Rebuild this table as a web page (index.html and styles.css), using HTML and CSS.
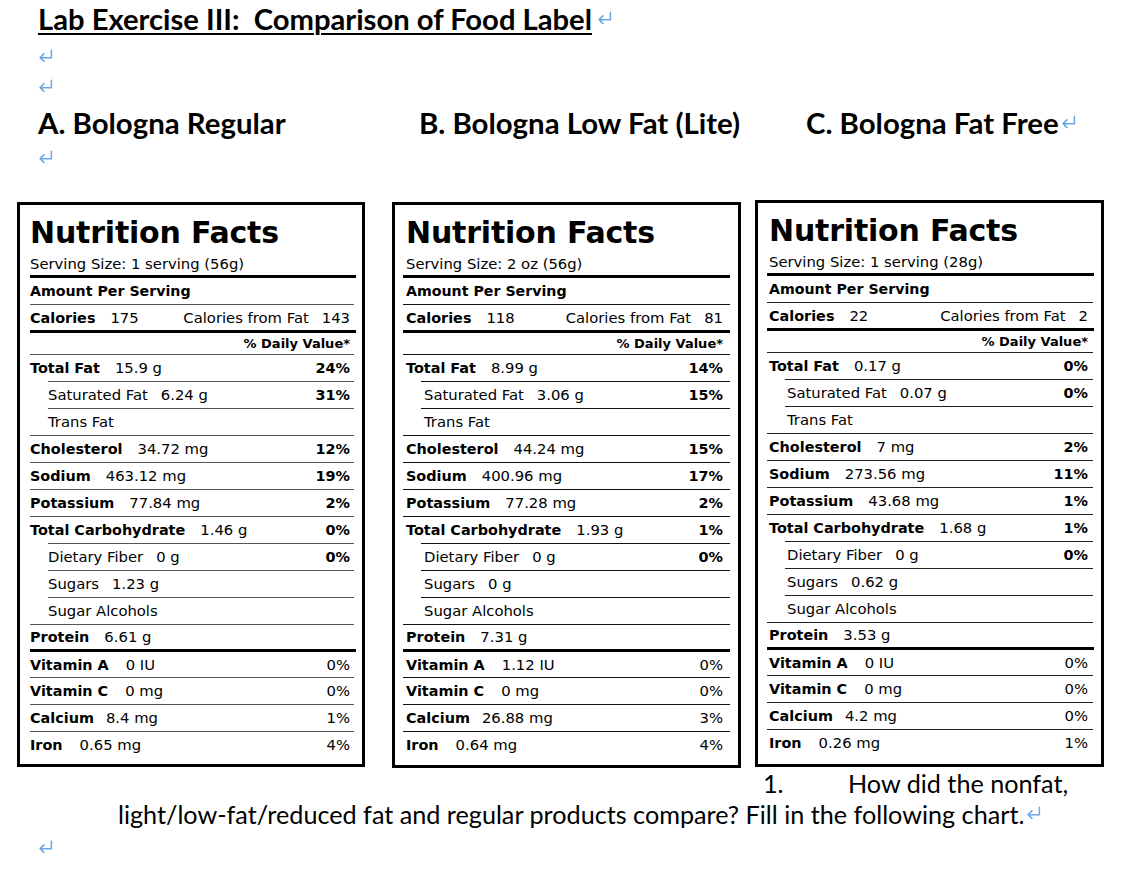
FILE: index.html
```html
<!DOCTYPE html>
<html>
<head>
<meta charset="utf-8">
<title>Lab Exercise III</title>
<link rel="stylesheet" href="styles.css">
</head>
<body>
<div class="page">
  <div class="title-line"><span class="title">Lab Exercise III:&nbsp; Comparison of Food Label</span><svg class="pm pm-inline" viewBox="0 0 14 12"><path d="M12.5 1V8H2M5.5 4.5L2 8L5.5 11.5"/></svg></div>
  <div class="pm-line"><svg class="pm" viewBox="0 0 14 12"><path d="M12.5 1V8H2M5.5 4.5L2 8L5.5 11.5"/></svg></div>
  <div class="pm-line"><svg class="pm" viewBox="0 0 14 12"><path d="M12.5 1V8H2M5.5 4.5L2 8L5.5 11.5"/></svg></div>
  <div class="headings">
    <div class="heading">A. Bologna Regular</div>
    <div class="heading">B. Bologna Low Fat (Lite)</div>
    <div class="heading">C. Bologna Fat Free<svg class="pm pm-inline tight" viewBox="0 0 14 12"><path d="M12.5 1V8H2M5.5 4.5L2 8L5.5 11.5"/></svg></div>
  </div>
  <div class="pm-line short"><svg class="pm" viewBox="0 0 14 12"><path d="M12.5 1V8H2M5.5 4.5L2 8L5.5 11.5"/></svg></div>

  <div class="labels">
    <div class="nf nf-a">
      <div class="nf-title">Nutrition Facts</div>
      <div class="nf-serving">Serving Size: 1 serving (56g)</div>
      <div class="nf-amount">Amount Per Serving</div>
      <div class="nf-cal"><span><b class="b">Calories</b><span class="v">175</span></span><span>Calories from Fat<span class="v">143</span></span></div>
      <div class="nf-dv">% Daily Value*</div>
      <div class="row"><b class="b">Total Fat</b><span class="v">15.9 g</span><b class="pct">24%</b></div>
      <div class="row sub"><span>Saturated Fat</span><span class="v">6.24 g</span><b class="pct">31%</b></div>
      <div class="row sub"><span>Trans Fat</span></div>
      <div class="row"><b class="b">Cholesterol</b><span class="v">34.72 mg</span><b class="pct">12%</b></div>
      <div class="row"><b class="b">Sodium</b><span class="v">463.12 mg</span><b class="pct">19%</b></div>
      <div class="row"><b class="b">Potassium</b><span class="v">77.84 mg</span><b class="pct">2%</b></div>
      <div class="row"><b class="b">Total Carbohydrate</b><span class="v">1.46 g</span><b class="pct">0%</b></div>
      <div class="row sub"><span>Dietary Fiber</span><span class="v">0 g</span><b class="pct">0%</b></div>
      <div class="row sub"><span>Sugars</span><span class="v">1.23 g</span></div>
      <div class="row sub"><span>Sugar Alcohols</span></div>
      <div class="row protein"><b class="b">Protein</b><span class="v">6.61 g</span></div>
      <div class="row vit-first"><b class="b">Vitamin A</b><span class="v vv">0 IU</span><span class="pct reg">0%</span></div>
      <div class="row"><b class="b">Vitamin C</b><span class="v vv">0 mg</span><span class="pct reg">0%</span></div>
      <div class="row"><b class="b">Calcium</b><span class="v vc">8.4 mg</span><span class="pct reg">1%</span></div>
      <div class="row"><b class="b">Iron</b><span class="v vv">0.65 mg</span><span class="pct reg">4%</span></div>
    </div>

    <div class="nf nf-b">
      <div class="nf-title">Nutrition Facts</div>
      <div class="nf-serving">Serving Size: 2 oz (56g)</div>
      <div class="nf-amount">Amount Per Serving</div>
      <div class="nf-cal"><span><b class="b">Calories</b><span class="v">118</span></span><span>Calories from Fat<span class="v">81</span></span></div>
      <div class="nf-dv">% Daily Value*</div>
      <div class="row"><b class="b">Total Fat</b><span class="v">8.99 g</span><b class="pct">14%</b></div>
      <div class="row sub"><span>Saturated Fat</span><span class="v">3.06 g</span><b class="pct">15%</b></div>
      <div class="row sub"><span>Trans Fat</span></div>
      <div class="row"><b class="b">Cholesterol</b><span class="v">44.24 mg</span><b class="pct">15%</b></div>
      <div class="row"><b class="b">Sodium</b><span class="v">400.96 mg</span><b class="pct">17%</b></div>
      <div class="row"><b class="b">Potassium</b><span class="v">77.28 mg</span><b class="pct">2%</b></div>
      <div class="row"><b class="b">Total Carbohydrate</b><span class="v">1.93 g</span><b class="pct">1%</b></div>
      <div class="row sub"><span>Dietary Fiber</span><span class="v">0 g</span><b class="pct">0%</b></div>
      <div class="row sub"><span>Sugars</span><span class="v">0 g</span></div>
      <div class="row sub"><span>Sugar Alcohols</span></div>
      <div class="row protein"><b class="b">Protein</b><span class="v">7.31 g</span></div>
      <div class="row vit-first"><b class="b">Vitamin A</b><span class="v vv">1.12 IU</span><span class="pct reg">0%</span></div>
      <div class="row"><b class="b">Vitamin C</b><span class="v vv">0 mg</span><span class="pct reg">0%</span></div>
      <div class="row"><b class="b">Calcium</b><span class="v vc">26.88 mg</span><span class="pct reg">3%</span></div>
      <div class="row"><b class="b">Iron</b><span class="v vv">0.64 mg</span><span class="pct reg">4%</span></div>
    </div>

    <div class="nf nf-c">
      <div class="nf-title">Nutrition Facts</div>
      <div class="nf-serving">Serving Size: 1 serving (28g)</div>
      <div class="nf-amount">Amount Per Serving</div>
      <div class="nf-cal"><span><b class="b">Calories</b><span class="v">22</span></span><span>Calories from Fat<span class="v">2</span></span></div>
      <div class="nf-dv">% Daily Value*</div>
      <div class="row"><b class="b">Total Fat</b><span class="v">0.17 g</span><b class="pct">0%</b></div>
      <div class="row sub"><span>Saturated Fat</span><span class="v">0.07 g</span><b class="pct">0%</b></div>
      <div class="row sub"><span>Trans Fat</span></div>
      <div class="row"><b class="b">Cholesterol</b><span class="v">7 mg</span><b class="pct">2%</b></div>
      <div class="row"><b class="b">Sodium</b><span class="v">273.56 mg</span><b class="pct">11%</b></div>
      <div class="row"><b class="b">Potassium</b><span class="v">43.68 mg</span><b class="pct">1%</b></div>
      <div class="row"><b class="b">Total Carbohydrate</b><span class="v">1.68 g</span><b class="pct">1%</b></div>
      <div class="row sub"><span>Dietary Fiber</span><span class="v">0 g</span><b class="pct">0%</b></div>
      <div class="row sub"><span>Sugars</span><span class="v">0.62 g</span></div>
      <div class="row sub"><span>Sugar Alcohols</span></div>
      <div class="row protein"><b class="b">Protein</b><span class="v">3.53 g</span></div>
      <div class="row vit-first"><b class="b">Vitamin A</b><span class="v vv">0 IU</span><span class="pct reg">0%</span></div>
      <div class="row"><b class="b">Vitamin C</b><span class="v vv">0 mg</span><span class="pct reg">0%</span></div>
      <div class="row"><b class="b">Calcium</b><span class="v vc">4.2 mg</span><span class="pct reg">0%</span></div>
      <div class="row"><b class="b">Iron</b><span class="v vv">0.26 mg</span><span class="pct reg">1%</span></div>
    </div>
  </div>

  <div class="q-line1"><span class="q-num">1.</span><span>How did the nonfat,</span></div>
  <div class="q-line2">light/low-fat/reduced fat and regular products compare? Fill in the following chart.<svg class="pm pm-inline" viewBox="0 0 14 12"><path d="M12.5 1V8H2M5.5 4.5L2 8L5.5 11.5"/></svg></div>
  <div class="pm-line"><svg class="pm" viewBox="0 0 14 12"><path d="M12.5 1V8H2M5.5 4.5L2 8L5.5 11.5"/></svg></div>
</div>
</body>
</html>
```

FILE: styles.css
```css
html, body {
  margin: 0;
  padding: 0;
  background: #ffffff;
}

.page {
  width: 1138px;
  box-sizing: border-box;
  padding: 0 0 0 38px;
  font-family: "Lato", "Open Sans", sans-serif;
  color: #000;
}

/* paragraph marks */
.pm {
  width: 15px;
  height: 13px;
  display: block;
}
.pm path {
  fill: none;
  stroke: #6aa7e6;
  stroke-width: 1.4;
  stroke-linecap: round;
  stroke-linejoin: round;
}
.pm-inline {
  display: inline-block;
  margin-left: 5px;
  vertical-align: 0.2em;
}
.pm-inline.tight {
  margin-left: 2px;
}
.pm-line {
  height: 30px;
  display: flex;
  align-items: center;
}
.pm-line.short {
  height: 23px;
}

.title-line {
  line-height: 38px;
  margin-bottom: 2px;
  font-size: 29.2px;
  font-weight: 700;
  white-space: nowrap;
}
.title {
  text-decoration: underline;
  text-decoration-thickness: 2px;
  text-underline-offset: 3px;
}

.headings {
  display: grid;
  grid-template-columns: 381px 387px auto;
  font-size: 29.4px;
  font-weight: 700;
  line-height: 45px;
}
.heading {
  white-space: nowrap;
}

/* label row */
.labels {
  margin: 34px 0 0 -21px;
  display: grid;
  grid-template-columns: 375px 363px 349px;
  align-items: start;
}

.nf {
  --pl: 10px;
  --pr: 6px;
  --tp: 0px;
  --lr: 2px;
  --pp: 4px;
  --line: #555;
  width: 348px;
  box-sizing: border-box;
  border: 3px solid #000;
  padding: 13px var(--pr) 6px var(--pl);
  font-family: "DejaVu Sans", "Verdana", sans-serif;
  font-size: 14.8px;
  color: #000;
}
.nf-b {
  --pl: 8px;
  --pr: 8px;
  --tp: 3px;
  --lr: 0px;
  --pp: 7px;
  --line: #111;
  width: 349px;
  padding-bottom: 7px;
}
.nf-c {
  --pl: 9px;
  --pr: 7px;
  --tp: 2px;
  --lr: 1px;
  --pp: 5px;
  --line: #222;
  width: 349px;
  margin-top: -2px;
  padding-bottom: 8px;
}

.nf-title {
  font-weight: 700;
  font-size: 30px;
  line-height: 30px;
  letter-spacing: -0.2px;
  padding-left: var(--tp);
  white-space: nowrap;
}
.nf-serving {
  padding: 5px 0 0 var(--tp);
  line-height: 22px;
  border-bottom: 3px solid #000;
}
.nf-amount {
  font-weight: 700;
  font-size: 14.2px;
  line-height: 26px;
  height: 26px;
  padding-left: var(--tp);
  margin-right: var(--lr);
  border-bottom: 1px solid var(--line);
}
.nf-cal {
  display: flex;
  justify-content: space-between;
  align-items: center;
  height: 25px;
  line-height: 25px;
  padding: 0 calc(var(--pp) + var(--lr)) 0 var(--tp);
  border-bottom: 3px solid #000;
}
.nf-dv {
  height: 21px;
  line-height: 21px;
  text-align: right;
  font-weight: 700;
  font-size: 13px;
  padding-right: var(--pp);
  margin-right: var(--lr);
}

.row {
  display: flex;
  align-items: center;
  height: 26px;
  line-height: 26px;
  border-top: 1px solid var(--line);
  margin-right: var(--lr);
  padding: 0 var(--pp) 0 var(--tp);
  white-space: nowrap;
}
.row.sub {
  margin-left: 18px;
}
.row.protein {
  height: 24px;
}
.row.vit-first {
  height: 25px;
  border-top: 3px solid #000;
  margin-right: 0;
  padding-right: calc(var(--pp) + var(--lr));
}

.b {
  font-weight: 700;
  font-size: 14.4px;
}
.v {
  margin-left: 13px;
}
.b + .v {
  margin-left: 15px;
}
.b + .vv {
  margin-left: 17px;
}
.b + .vc {
  margin-left: 12px;
}
.pct {
  margin-left: auto;
  font-weight: 700;
  font-size: 14.4px;
}
.pct.reg {
  font-weight: 400;
  font-size: 14.8px;
}

/* question */
.q-line1 {
  display: flex;
  padding-left: 725px;
  font-size: 25.2px;
  line-height: 30px;
  white-space: nowrap;
}
.q-num {
  width: 85px;
}
.q-line2 {
  padding-left: 80px;
  font-size: 25.2px;
  line-height: 33px;
  white-space: nowrap;
}
.q-line2 .pm-inline {
  margin-left: 2px;
}
```
